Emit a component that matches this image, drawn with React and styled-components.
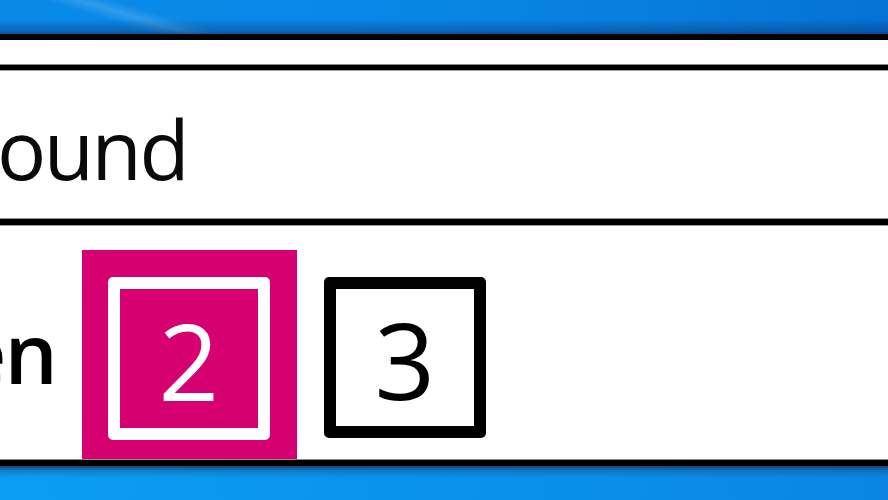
import React from "react";
import styled, { createGlobalStyle } from "styled-components";

const Global = createGlobalStyle`
  html, body {
    margin: 0;
    padding: 0;
    width: 888px;
    height: 500px;
    overflow: hidden;
    background: #ffffff;
  }
  #root { height: 500px; }
`;

const Page = styled.div`
  display: flex;
  flex-direction: column;
  width: 888px;
  height: 500px;
  overflow: hidden;
  font-family: "Open Sans", "Noto Sans", sans-serif;
  color: #000;
`;

const DesktopTop = styled.div`
  height: 34px;
  flex: none;
  background:
    linear-gradient(180deg, rgba(10, 40, 90, 0) 55%, rgba(10, 40, 90, 0.35) 92%, rgba(10, 40, 90, 0.6) 100%),
    linear-gradient(17deg, rgba(255,255,255,0) 15.5%, rgba(255,255,255,0.16) 19%, rgba(255,255,255,0) 22.5%),
    linear-gradient(90deg, #0a8ae8 0%, #0888e8 40%, #0780e0 70%, #0572d6 100%);
`;

const DesktopBottom = styled.div`
  flex: 1;
  background:
    linear-gradient(180deg, rgba(25, 55, 95, 0.85) 0px, rgba(25, 55, 95, 0.25) 5px, rgba(25, 55, 95, 0) 12px),
    linear-gradient(90deg, #0c9ef2 0%, #0a94ee 40%, #0a8ee8 70%, #0a86e2 100%);
`;

const Rule = styled.div`
  flex: none;
  height: ${(p) => p.$h}px;
  background: #000;
  border-top: ${(p) => (p.$top ? "1px solid #8a8a8a" : "none")};
  border-bottom: ${(p) => (p.$bottom ? "1px solid #a0a0a0" : "none")};
`;

const TitleStrip = styled.div`
  height: 24px;
  flex: none;
  background: #fff;
`;

const SoundSection = styled.div`
  height: 147px;
  flex: none;
  box-sizing: border-box;
  padding-top: 36px;
  background: #fff;
`;

const SoundText = styled.div`
  font-size: 82px;
  line-height: 1;
  font-weight: 400;
  letter-spacing: -2.5px;
  margin-left: -3px;
  white-space: nowrap;
  color: #0a0a0a;
`;

const ScreenSection = styled.div`
  height: 233px;
  flex: none;
  display: flex;
  align-items: flex-end;
  background: #fff;
`;

const Label = styled.div`
  align-self: flex-start;
  margin-top: 84px;
  margin-left: -42px;
  margin-right: 26px;
  font-size: 84px;
  font-weight: 600;
  letter-spacing: -2px;
  line-height: 1;
  white-space: nowrap;
  color: #000;
`;

const Tile = styled.div`
  width: 215px;
  height: 209px;
  box-sizing: border-box;
  padding: 27px 27px 19px 26px;
  background: ${(p) => (p.$selected ? "#d60070" : "transparent")};
  flex: none;
`;

const NumberBox = styled.div`
  width: 162px;
  height: ${(p) => p.$h}px;
  box-sizing: border-box;
  border: 12px solid ${(p) => (p.$light ? "#ffffff" : "#000000")};
  border-radius: 5px;
  display: flex;
  align-items: center;
  justify-content: center;
  padding-top: 2px;
  font-size: 106px;
  line-height: 1;
  font-weight: 500;
  color: ${(p) => (p.$light ? "#ffffff" : "#000000")};
  flex: none;
`;

const PlainSlot = styled.div`
  margin-left: 27px;
  margin-bottom: 21px;
  flex: none;
`;

export default function App() {
  return (
    <>
      <Global />
      <Page>
        <DesktopTop />
        <Rule $h={6} $bottom={false} />
        <TitleStrip />
        <Rule $h={5} $top $bottom />
        <SoundSection>
          <SoundText>ound</SoundText>
        </SoundSection>
        <Rule $h={6} $top $bottom />
        <ScreenSection>
          <Label>en</Label>
          <Tile $selected>
            <NumberBox $light $h={163}>2</NumberBox>
          </Tile>
          <PlainSlot>
            <NumberBox $h={161}>3</NumberBox>
          </PlainSlot>
        </ScreenSection>
        <Rule $h={6} $top />
        <DesktopBottom />
      </Page>
    </>
  );
}
